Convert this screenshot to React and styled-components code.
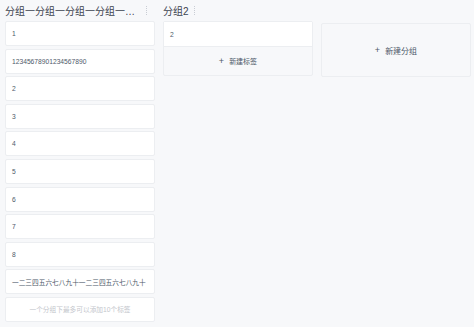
import React from "react";
import styled, { createGlobalStyle } from "styled-components";

const Global = createGlobalStyle`
  html, body { margin: 0; padding: 0; background: #f7f8fa; }
  body { font-family: "Liberation Sans", "Noto Sans CJK SC", sans-serif; }
  * { box-sizing: border-box; }
`;

const Board = styled.div`
  display: grid;
  grid-template-columns: repeat(3, 154px);
  column-gap: 4px;
  padding: 0 3px;
  align-items: start;
`;

const Column = styled.div`
  display: flex;
  flex-direction: column;
`;

const Header = styled.div`
  height: 21px;
  display: flex;
  align-items: center;
  padding: 0 2px;
  font-size: 10px;
  color: #3d4450;
  gap: 5px;
`;

const Title = styled.span`
  flex: 0 1 auto;
  white-space: nowrap;
  overflow: hidden;
  text-overflow: ellipsis;
  max-width: 136px;
`;

const Handle = styled.span`
  flex: none;
  width: 1px;
  height: 9px;
  border-left: 1px dotted #c9cdd4;
`;

const List = styled.div`
  display: flex;
  flex-direction: column;
  gap: 2.6px;
  padding: 0 2px;
`;

const Card = styled.div`
  height: 25px;
  display: flex;
  align-items: center;
  padding: 0 6px;
  background: #fff;
  border: 1px solid #eceef1;
  border-radius: 2px;
  font-size: 6.7px;
  color: ${(p) => (p.$muted ? "#c3c6cc" : "#4e5969")};
  justify-content: ${(p) => (p.$center ? "center" : "flex-start")};
  white-space: nowrap;
  overflow: hidden;
`;

const Group = styled.div`
  margin: 0 2px;
  border: 1px solid #eceef1;
  border-radius: 2px;
  background: #f7f8fa;
  display: flex;
  flex-direction: column;
`;

const GroupCard = styled(Card)`
  border: none;
  border-bottom: 1px solid #eceef1;
  border-radius: 0;
`;

const AddButton = styled.div`
  height: 28px;
  display: flex;
  align-items: center;
  justify-content: center;
  gap: 5px;
  font-size: 7px;
  color: #4e5969;
`;

const Plus = styled.span`
  font-size: 9px;
  color: #4e5969;
  line-height: 1;
`;

const NewGroup = styled.div`
  margin: 23px 2px 0;
  height: 54px;
  border: 1px solid #eceef1;
  border-radius: 2px;
  background: #f7f8fa;
  display: flex;
  align-items: center;
  justify-content: center;
  gap: 5px;
  font-size: 8px;
  color: #4e5969;
`;

const items = [
  "1",
  "12345678901234567890",
  "2",
  "3",
  "4",
  "5",
  "6",
  "7",
  "8",
  "一二三四五六七八九十一二三四五六七八九十",
];

export default function App() {
  return (
    <>
      <Global />
      <Board>
        <Column>
          <Header>
            <Title>分组一分组一分组一分组一分组一分组一</Title>
            <Handle />
          </Header>
          <List>
            {items.map((t, i) => (
              <Card key={i}>{t}</Card>
            ))}
            <Card $muted $center>一个分组下最多可以添加10个标签</Card>
          </List>
        </Column>
        <Column>
          <Header>
            <Title>分组2</Title>
            <Handle />
          </Header>
          <Group>
            <GroupCard>2</GroupCard>
            <AddButton>
              <Plus>+</Plus>新建标签
            </AddButton>
          </Group>
        </Column>
        <Column>
          <NewGroup>
            <Plus>+</Plus>新建分组
          </NewGroup>
        </Column>
      </Board>
    </>
  );
}
